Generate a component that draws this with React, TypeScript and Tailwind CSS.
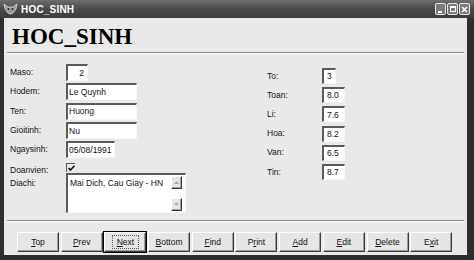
const sunken =
  "bg-white border-t-2 border-l-2 border-t-[#5a5a5a] border-l-[#5a5a5a] border-r border-b border-r-[#f6f6f6] border-b-[#f6f6f6]";

const raised =
  "bg-[#e6e6e6] border border-t-white border-l-white border-r-[#3a3a3a] border-b-[#3a3a3a] shadow-[inset_-1px_-1px_0_#9c9c9c]";

function Field({ label, value, width, right }: { label: string; value: string; width: string; right?: boolean }) {
  return (
    <div className="flex items-center h-[17px]">
      <span className="w-[56px]">{label}</span>
      <div className={`${sunken} ${width} h-[17px] flex items-center ${right ? "justify-end pr-[3px]" : "pl-[1px]"}`}>
        {value}
      </div>
    </div>
  );
}

function Score({ label, value, width }: { label: string; value: string; width: string }) {
  return (
    <div className="flex items-center h-[16px]">
      <span className="w-[55px]">{label}</span>
      <div className={`${sunken} ${width} h-[16px] flex items-center pl-[3px]`}>{value}</div>
    </div>
  );
}

function Arrow({ up }: { up?: boolean }) {
  return (
    <div className={`${raised} w-[11px] h-[13px] flex items-center justify-center`}>
      <svg width="5" height="3" viewBox="0 0 5 3">
        <path d={up ? "M2.5 0 L5 3 L0 3 Z" : "M0 0 L5 0 L2.5 3 Z"} fill="#a8a8a8" />
      </svg>
    </div>
  );
}

const buttons: [string, string, string][] = [
  ["", "T", "op"],
  ["", "P", "rev"],
  ["", "N", "ext"],
  ["", "B", "ottom"],
  ["", "F", "ind"],
  ["P", "r", "int"],
  ["", "A", "dd"],
  ["", "E", "dit"],
  ["", "D", "elete"],
  ["E", "x", "it"],
];

export default function App() {
  return (
    <div className="w-[474px] h-[260px] flex flex-col bg-[#2e2e2e] text-[8.5px] text-[#111] font-['Liberation_Sans',Arial,sans-serif]">
      {/* title bar */}
      <div className="h-[18px] flex items-center bg-gradient-to-b from-[#6e6e6e] via-[#4a4a4a] to-[#3c3c3c] pl-[3px] pr-[4px]">
        <svg width="15" height="12" viewBox="0 0 15 12" className="mr-[3px]">
          <path d="M1 1 L5 4 L10 4 L14 1 L13 6 L10 10 L7.5 11 L5 10 L2 6 Z" fill="#9a9a9a" stroke="#dcdcdc" strokeWidth="0.8" />
          <circle cx="5.5" cy="6" r="0.9" fill="#222" />
          <circle cx="9.5" cy="6" r="0.9" fill="#222" />
        </svg>
        <span className="text-white font-bold text-[10px] tracking-[0.2px]">HOC_SINH</span>
        <div className="ml-auto flex gap-[1px]">
          {["min", "max", "close"].map((k) => (
            <div key={k} className="w-[11px] h-[12px] rounded-[2px] border border-[#e8e8e8] bg-[#7a7a7a] flex items-center justify-center">
              {k === "min" && <div className="w-[4px] h-[2px] bg-white mt-[5px] -ml-[2px]" />}
              {k === "max" && <div className="w-[6px] h-[6px] border border-white border-t-2" />}
              {k === "close" && (
                <svg width="7" height="7" viewBox="0 0 7 7">
                  <path d="M1 1 L6 6 M6 1 L1 6" stroke="white" strokeWidth="1.6" />
                </svg>
              )}
            </div>
          ))}
        </div>
      </div>

      {/* client area */}
      <div className="flex-1 flex flex-col bg-[#e9e9e9] ml-[4px] mr-[7px] mb-[5px]">
        <div className="h-[34px] pl-[8px] pt-[5px] font-['Liberation_Serif','Times_New_Roman',serif] font-bold text-[23px] leading-[28px] text-black">
          HOC_SINH
        </div>
        <div className="mx-[3px] h-[2px] border-t border-t-[#8c8c8c] border-b border-b-[#f8f8f8]" />

        <div className="flex pl-[6px] h-[166px]">
          <div className="w-[257px] flex flex-col pt-[10px]">
            <div className="flex flex-col gap-[2.3px]">
              <Field label="Maso:" value="2" width="w-[22px]" right />
              <Field label="Hodem:" value="Le Quynh" width="w-[71px]" />
              <Field label="Ten:" value="Huong" width="w-[71px]" />
              <Field label="Gioitinh:" value="Nu" width="w-[71px]" />
              <Field label="Ngaysinh:" value="05/08/1991" width="w-[49px]" />
            </div>
            <div className="flex items-center h-[9px] mt-[5px]">
              <span className="w-[56px] mt-[6px]">Doanvien:</span>
              <div className="w-[9px] h-[9px] border-t border-l border-[#5a5a5a] flex items-center justify-center">
                <svg width="7" height="6" viewBox="0 0 7 6">
                  <path d="M0.5 3 L2.5 5 L6.5 0.8" fill="none" stroke="black" strokeWidth="1.5" />
                </svg>
              </div>
            </div>
            <div className="flex mt-[1px]">
              <span className="w-[56px] pt-[4px]">Diachi:</span>
              <div className={`${sunken} w-[120px] h-[40px] flex`}>
                <span className="flex-1 pl-[2px] pt-[2px]">Mai Dich, Cau Giay - HN</span>
                <div className="w-[14px] flex flex-col justify-between py-[1px] pr-[2px]">
                  <Arrow up />
                  <Arrow />
                </div>
              </div>
            </div>
          </div>

          <div className="flex flex-col gap-[3.2px] pt-[14px]">
            <Score label="To:" value="3" width="w-[14px]" />
            <Score label="Toan:" value="8.0" width="w-[23px]" />
            <Score label="Li:" value="7.6" width="w-[23px]" />
            <Score label="Hoa:" value="8.2" width="w-[23px]" />
            <Score label="Van:" value="6.5" width="w-[23px]" />
            <Score label="Tin:" value="8.7" width="w-[23px]" />
          </div>
        </div>

        <div className="mx-[3px] h-[2px] border-t border-t-[#8c8c8c] border-b border-b-[#f8f8f8]" />

        <div className="flex gap-[1.7px] pl-[13px] mt-[10px]">
          {buttons.map(([a, k, b]) => {
            const focus = k === "N";
            return (
              <div
                key={k + b}
                className={`${raised} w-[42px] h-[20px] flex items-center justify-center ${focus ? "outline outline-1 outline-black" : ""}`}
              >
                <span className={focus ? "px-[4px] outline outline-1 outline-dotted outline-[#555]" : ""}>
                  {a}
                  <span className="underline">{k}</span>
                  {b}
                </span>
              </div>
            );
          })}
        </div>
      </div>
    </div>
  );
}
